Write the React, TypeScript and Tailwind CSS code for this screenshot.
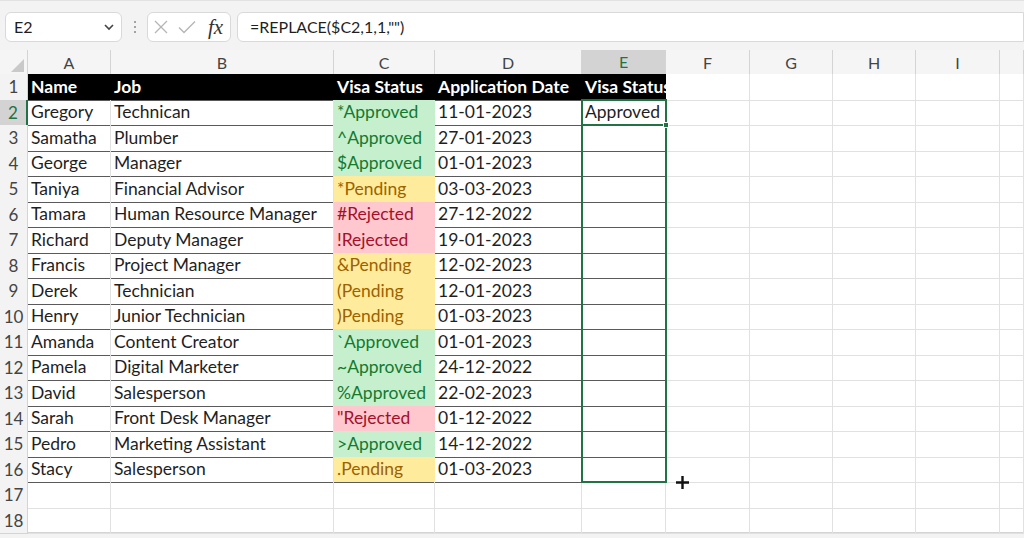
import React from "react";

type Tone = "g" | "y" | "r";

const rows: [string, string, string, string, Tone][] = [
  ["Gregory", "Technican", "*Approved", "11-01-2023", "g"],
  ["Samatha", "Plumber", "^Approved", "27-01-2023", "g"],
  ["George", "Manager", "$Approved", "01-01-2023", "g"],
  ["Taniya", "Financial Advisor", "*Pending", "03-03-2023", "y"],
  ["Tamara", "Human Resource Manager", "#Rejected", "27-12-2022", "r"],
  ["Richard", "Deputy Manager", "!Rejected", "19-01-2023", "r"],
  ["Francis", "Project Manager", "&Pending", "12-02-2023", "y"],
  ["Derek", "Technician", "(Pending", "12-01-2023", "y"],
  ["Henry", "Junior Technician", ")Pending", "01-03-2023", "y"],
  ["Amanda", "Content Creator", "`Approved", "01-01-2023", "g"],
  ["Pamela", "Digital Marketer", "~Approved", "24-12-2022", "g"],
  ["David", "Salesperson", "%Approved", "22-02-2023", "g"],
  ["Sarah", "Front Desk Manager", "\"Rejected", "01-12-2022", "r"],
  ["Pedro", "Marketing Assistant", ">Approved", "14-12-2022", "g"],
  ["Stacy", "Salesperson", ".Pending", "01-03-2023", "y"],
];

const toneClass: Record<Tone, string> = {
  g: "bg-[#c6efce] text-[#137a30]",
  y: "bg-[#ffeb9c] text-[#9c6200]",
  r: "bg-[#ffc7ce] text-[#a4102a]",
};

const cols = "grid grid-cols-[28px_83px_223px_101px_147px_84px_84px_83px_83px_84px_1fr]";
const letters = ["A", "B", "C", "D", "E", "F", "G", "H", "I", ""];

function Cell({ children, className = "" }: { children?: React.ReactNode; className?: string }) {
  return (
    <div className={`h-full border-r border-b border-[#e1e1e1] px-[3px] flex items-center whitespace-nowrap overflow-hidden ${className}`}>
      {children}
    </div>
  );
}

function EmptyCells({ from }: { from: number }) {
  return (
    <>
      {letters.slice(from).map((l, i) => (
        <Cell key={i} />
      ))}
    </>
  );
}

export default function App() {
  return (
    <div className="w-[1024px] h-[538px] overflow-hidden bg-[#f3f3f3] text-[#1f1f1f]" style={{ fontFamily: "Lato, 'Open Sans', sans-serif" }}>
      {/* formula toolbar */}
      <div className="h-[50px] border-t border-[#e2e2e2] flex items-start pt-[11px] pl-[5px]">
        <div className="w-[117px] h-[30px] bg-white border border-[#d9d9d9] rounded-[6px] flex items-center justify-between pl-[8px] pr-[5px] text-[16px]">
          <span>E2</span>
          <svg width="14" height="14" viewBox="0 0 14 14" fill="none" stroke="#444" strokeWidth="1.6">
            <path d="M3 5l4 4 4-4" />
          </svg>
        </div>
        <div className="w-[25px] h-[30px] flex flex-col items-center justify-center gap-[3px]">
          <span className="w-[2px] h-[2px] rounded-full bg-[#888]" />
          <span className="w-[2px] h-[2px] rounded-full bg-[#888]" />
          <span className="w-[2px] h-[2px] rounded-full bg-[#888]" />
        </div>
        <div className="w-[84px] h-[30px] bg-white border border-[#d9d9d9] rounded-[6px] flex items-center pl-[5px] gap-[8px]">
          <svg width="16" height="16" viewBox="0 0 16 16" fill="none" stroke="#b5b5b5" strokeWidth="1.3">
            <path d="M2 2l12 12M14 2L2 14" />
          </svg>
          <svg width="20" height="16" viewBox="0 0 20 16" fill="none" stroke="#b5b5b5" strokeWidth="1.3">
            <path d="M2 8.5l5 5L18 2.5" />
          </svg>
          <span className="text-[21px] italic text-[#333] leading-none ml-[3px]" style={{ fontFamily: "'Liberation Serif', serif" }}>
            fx
          </span>
        </div>
        <div className="ml-[6px] flex-1 h-[30px] bg-white border border-[#d9d9d9] rounded-l-[6px] flex items-center pl-[12px] text-[16px]">
          =REPLACE($C2,1,1,"")
        </div>
      </div>

      {/* column headers */}
      <div className={`${cols} h-[24px] bg-[#f5f5f5] text-[16px] text-[#444]`}>
        <div className="relative border-r border-b border-[#d4d4d4]">
          <svg className="absolute right-[3px] bottom-[3px]" width="13" height="13" viewBox="0 0 13 13">
            <path d="M13 0V13H0Z" fill="#c9c9c9" />
          </svg>
        </div>
        {letters.map((l, i) => (
          <div
            key={i}
            className={`flex items-center justify-center border-r border-b border-[#d4d4d4] ${
              l === "E" ? "bg-[#d3d3d3] text-[#217346] border-b-2 border-b-[#217346]" : ""
            }`}
          >
            {l}
          </div>
        ))}
      </div>

      {/* sheet body */}
      <div className="relative bg-white h-[459px] border-b border-[#d4d4d4]">
        {/* header row 1 */}
        <div className={`${cols} h-[25.5px] text-[17.5px]`}>
          <div className="bg-[#f3f3f3] border-r border-b border-[#d4d4d4] flex items-center justify-center text-[#444] text-[17px]">1</div>
          {["Name", "Job", "Visa Status", "Application Date", "Visa Status"].map((t, i) => (
            <div key={i} className="h-full bg-black text-white font-bold px-[3px] flex items-center whitespace-nowrap overflow-hidden border-b border-[#595959]">
              {t}
            </div>
          ))}
          <EmptyCells from={5} />
        </div>

        {rows.map((r, idx) => {
          const n = idx + 2;
          const active = n === 2;
          return (
            <div key={n} className={`${cols} h-[25.5px] text-[17.5px]`}>
              <div
                className={`flex items-center justify-center border-b border-[#d4d4d4] text-[17px] ${
                  active ? "bg-[#d3d3d3] text-[#217346] border-r-2 border-r-[#217346]" : "bg-[#f3f3f3] text-[#444] border-r border-[#d4d4d4]"
                }`}
              >
                {n}
              </div>
              <Cell className="border-b-[#5a5a5a]">{r[0]}</Cell>
              <Cell className="border-b-[#5a5a5a]">{r[1]}</Cell>
              <Cell className={`border-b-[#5a5a5a] border-r-transparent ${toneClass[r[4]]}`}>{r[2]}</Cell>
              <Cell className="border-b-[#5a5a5a]">{r[3]}</Cell>
              <Cell className="border-b-[#5a5a5a]">{active ? "Approved" : ""}</Cell>
              <EmptyCells from={5} />
            </div>
          );
        })}

        {[17, 18].map((n) => (
          <div key={n} className={`${cols} h-[25.5px] text-[17px]`}>
            <div className="bg-[#f3f3f3] border-r border-b border-[#d4d4d4] flex items-center justify-center text-[#444]">{n}</div>
            <EmptyCells from={0} />
          </div>
        ))}

        {/* selection E2:E16 */}
        <div className="absolute left-[581px] top-[24.5px] w-[86px] h-[384.5px] border-2 border-[#217346] pointer-events-none" />
        <div className="absolute left-[581px] top-[50px] w-[86px] h-[2px] bg-[#217346]" />
        <div className="absolute left-[663px] top-[48px] w-[6px] h-[6px] bg-[#217346] border border-white" />

        {/* cursor */}
        <svg className="absolute left-[675px] top-[401px]" width="15" height="15" viewBox="0 0 15 15">
          <path d="M7.5 1v13M1 7.5h13" stroke="#111" strokeWidth="2.4" />
        </svg>
      </div>
    </div>
  );
}
